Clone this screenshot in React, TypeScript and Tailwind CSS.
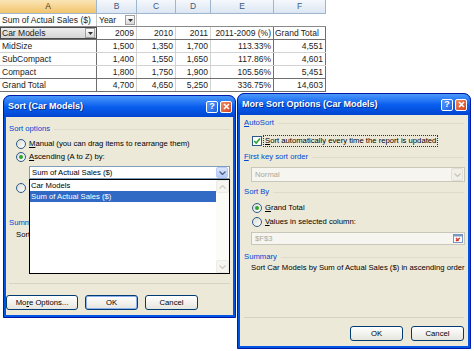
import React from 'react';

const COLS = ['w-[97px]', 'w-[40px]', 'w-[39px]', 'w-[35px]', 'w-[63px]', 'w-[52px]'];
const VLINE = [
  'border-r border-r-[#6F6F6F]',
  'border-r border-r-[#D3D3D3]',
  'border-r border-r-[#D3D3D3]',
  'border-r border-r-[#D3D3D3]',
  'border-r border-r-[#6F6F6F]',
  'border-r border-r-[#6F6F6F]',
];

const DATA = [
  ['MidSize', '1,500', '1,350', '1,700', '113.33%', '4,551'],
  ['SubCompact', '1,400', '1,550', '1,650', '117.86%', '4,601'],
  ['Compact', '1,800', '1,750', '1,900', '105.56%', '5,451'],
];

function CellDrop() {
  return (
    <span className="flex h-[10px] w-[10px] items-center justify-center border border-[#A0A0A0] bg-gradient-to-b from-white to-[#D8D8D8]">
      <svg width="5" height="3" viewBox="0 0 5 3">
        <path d="M0 0h5L2.5 3z" fill="#333" />
      </svg>
    </span>
  );
}

function Sheet() {
  return (
    <div className="w-[326px] text-[8.5px] leading-none text-[#222]">
      {/* column letters */}
      <div className="flex h-[14px]">
        {['A', 'B', 'C', 'D', 'E', 'F'].map((l, i) => (
          <div
            key={l}
            className={`${COLS[i]} flex items-center justify-center border-r border-b border-[#9EB6CE] ${
              i === 0
                ? 'bg-gradient-to-b from-[#FAE5B6] to-[#F2C46C] text-[#4A3510]'
                : 'bg-gradient-to-b from-[#F5F8FC] to-[#DCE6F3] text-[#41587A]'
            }`}
          >
            {l}
          </div>
        ))}
      </div>

      {/* page field row */}
      <div className="flex h-[13px] border-b border-b-[#8A8A8A]">
        <div className="flex w-[97px] items-center border-r border-r-[#C8C8C8] pl-[2px]">Sum of Actual Sales ($)</div>
        <div className="flex w-[40px] items-center justify-between border-r border-r-[#C8C8C8] pl-[2px] pr-[1px]">
          Year
          <CellDrop />
        </div>
      </div>

      {/* column field row */}
      <div className="flex h-[13px] border-b border-b-[#6F6F6F]">
        <div className="flex w-[97px] items-center justify-between border border-[#4A4A4A] bg-gradient-to-b from-[#EDEDED] to-[#D6D6D6] pl-[1px] pr-[1px]">
          Car Models
          <CellDrop />
        </div>
        {['2009', '2010', '2011', '2011-2009 (%)'].map((v, i) => (
          <div key={v} className={`${COLS[i + 1]} ${VLINE[i + 1]} flex items-center justify-end pr-[2px]`}>
            {v}
          </div>
        ))}
        <div className={`${COLS[5]} ${VLINE[5]} flex items-center overflow-hidden whitespace-nowrap pl-[1px]`}>Grand Total</div>
      </div>

      {DATA.map((row, r) => (
        <div
          key={row[0]}
          className={`flex h-[13px] border-b ${r === 2 ? 'border-b-[#6F6F6F]' : 'border-b-[#D3D3D3]'}`}
        >
          {row.map((v, i) => (
            <div
              key={i}
              className={`${COLS[i]} ${VLINE[i]} flex items-center ${i === 0 ? 'pl-[2px]' : 'justify-end pr-[2px]'}`}
            >
              {v}
            </div>
          ))}
        </div>
      ))}

      <div className="flex h-[13px] border-b border-b-[#6F6F6F]">
        {['Grand Total', '4,700', '4,650', '5,250', '336.75%', '14,603'].map((v, i) => (
          <div
            key={i}
            className={`${COLS[i]} ${VLINE[i]} flex items-center ${i === 0 ? 'pl-[2px]' : 'justify-end pr-[2px]'}`}
          >
            {v}
          </div>
        ))}
      </div>
    </div>
  );
}

function TitleBar({ title }: { title: string }) {
  return (
    <div className="flex h-[21px] shrink-0 items-center justify-between rounded-t-[6px] bg-gradient-to-b from-[#4A98FA] via-[#0A5FEF] to-[#0045D0] pl-[4px] pr-[3px]">
      <span className="text-[9px] font-bold text-white [text-shadow:1px_1px_0_#0B2A85]">{title}</span>
      <div className="flex gap-[2px]">
        <div className="flex h-[12px] w-[12px] items-center justify-center rounded-[2px] border border-white bg-gradient-to-br from-[#5A9BFF] to-[#1D5FE0] text-[9px] font-bold leading-none text-white">
          ?
        </div>
        <div className="flex h-[12px] w-[12px] items-center justify-center rounded-[2px] border border-white bg-gradient-to-br from-[#F08A63] to-[#D3401A]">
          <svg width="7" height="7" viewBox="0 0 7 7">
            <path d="M1 1l5 5M6 1L1 6" stroke="white" strokeWidth="1.6" />
          </svg>
        </div>
      </div>
    </div>
  );
}

function Group({ children, className = '' }: { children: React.ReactNode; className?: string }) {
  return (
    <div className={`flex h-[12px] items-center text-[#0046D5] ${className}`}>
      <span>{children}</span>
      <span className="ml-[4px] h-px flex-1 bg-[#DEDBCD]" />
    </div>
  );
}

function Radio({ checked = false }: { checked?: boolean }) {
  return (
    <span className="flex h-[10px] w-[10px] shrink-0 items-center justify-center rounded-full border border-[#2A5A8C] bg-gradient-to-br from-[#DCDBD3] to-white">
      {checked && <span className="h-[4px] w-[4px] rounded-full bg-[#2BA62B]" />}
    </span>
  );
}

function XPButton({ children, className = '', focus = false }: { children: React.ReactNode; className?: string; focus?: boolean }) {
  return (
    <div
      className={`flex h-[15px] items-center justify-center rounded-[3px] border border-[#003C74] bg-gradient-to-b from-white to-[#E6E5DE] text-black ${
        focus ? 'shadow-[inset_0_0_0_1px_#8FB2EE]' : ''
      } ${className}`}
    >
      {children}
    </div>
  );
}

function ComboArrow({ disabled = false }: { disabled?: boolean }) {
  return (
    <span
      className={`flex h-full w-[12px] items-center justify-center rounded-[2px] border ${
        disabled ? 'border-[#E2E0D6] bg-[#F1EFE7]' : 'border-[#B9CBF3] bg-gradient-to-b from-[#DCE6FD] to-[#B3C9F6]'
      }`}
    >
      <svg width="7" height="4" viewBox="0 0 7 4">
        <path d="M0.5 0.5L3.5 3.5L6.5 0.5" stroke={disabled ? '#C9C7BA' : '#4D6185'} strokeWidth="1.3" fill="none" />
      </svg>
    </span>
  );
}

function SortDialog() {
  return (
    <div className="absolute left-[3px] top-[95px] flex h-[223px] w-[233px] flex-col overflow-hidden rounded-t-[7px] border border-[#0019A8] bg-[#0054E3]">
      <TitleBar title="Sort (Car Models)" />
      <div className="relative mx-[2px] mb-[2px] flex flex-1 flex-col bg-[#ECE9D8] px-[3px] pb-[5px] pt-[6px]">
        <Group>Sort options</Group>
        <div className="ml-[7px] mt-[3px] flex h-[12px] items-center gap-[3px]">
          <Radio />
          <span>
            <u>M</u>anual (you can drag items to rearrange them)
          </span>
        </div>
        <div className="ml-[7px] mt-[1px] flex h-[12px] items-center gap-[3px]">
          <Radio checked />
          <span>
            <u>A</u>scending (A to Z) by:
          </span>
        </div>
        <div className="ml-[20px] mt-[3px] flex h-[13px] w-[201px] items-center justify-between border border-[#7F9DB9] bg-white pl-[2px] pr-px">
          Sum of Actual Sales ($)
          <ComboArrow />
        </div>
        {/* descending option, its label lies under the open list */}
        <div className="ml-[7px] mt-[3px] flex h-[12px] items-center gap-[3px]">
          <Radio />
        </div>
        <Group className="mt-[23px]">Summary</Group>
        <div className="ml-[7px] mt-[2px] whitespace-nowrap">Sort</div>

        <div className="mt-auto h-px bg-[#D6D3C4]" />
        <div className="-ml-[3px] mt-[11px] flex gap-[7px]">
          <XPButton className="w-[72px]">
            Mo<u>r</u>e Options...
          </XPButton>
          <XPButton className="w-[53px]" focus>
            OK
          </XPButton>
          <XPButton className="w-[53px]">Cancel</XPButton>
        </div>

        {/* open drop-down list */}
        <div className="absolute left-[23px] top-[62px] flex h-[95px] w-[201px] border border-black bg-white">
          <div className="flex-1 pt-[1px]">
            <div className="flex h-[10px] items-center pl-[1px]">Car Models</div>
            <div className="flex h-[11px] items-center bg-[#316AC5] pl-[1px] text-white">Sum of Actual Sales ($)</div>
          </div>
          <div className="flex w-[13px] flex-col justify-between bg-[#FBFBF8]">
            <div className="flex h-[13px] items-center justify-center rounded-[2px] border border-[#ECEBE4] bg-[#F6F5F0]">
              <svg width="7" height="4" viewBox="0 0 7 4">
                <path d="M0.5 3.5L3.5 0.5L6.5 3.5" stroke="#CFCDC2" strokeWidth="1.3" fill="none" />
              </svg>
            </div>
            <div className="flex h-[13px] items-center justify-center rounded-[2px] border border-[#ECEBE4] bg-[#F6F5F0]">
              <svg width="7" height="4" viewBox="0 0 7 4">
                <path d="M0.5 0.5L3.5 3.5L6.5 0.5" stroke="#CFCDC2" strokeWidth="1.3" fill="none" />
              </svg>
            </div>
          </div>
        </div>
      </div>
    </div>
  );
}

function MoreDialog() {
  return (
    <div className="absolute left-[237px] top-[93px] flex h-[256px] w-[234px] flex-col overflow-hidden rounded-t-[7px] border border-[#0019A8] bg-[#0054E3]">
      <TitleBar title="More Sort Options (Car Models)" />
      <div className="mx-[2px] mb-[2px] flex flex-1 flex-col bg-[#ECE9D8] px-[4px] pb-[5px] pt-[2px]">
        <Group>
          <u>A</u>utoSort
        </Group>
        <div className="ml-[8px] mt-[6px] flex h-[12px] items-center gap-[1px]">
          <span className="flex h-[10px] w-[10px] shrink-0 items-center justify-center border border-[#2A5A8C] bg-white">
            <svg width="8" height="8" viewBox="0 0 8 8">
              <path d="M1.2 4l2 2.1L7 1.5" stroke="#2BA62B" strokeWidth="1.6" fill="none" />
            </svg>
          </span>
          <span className="flex h-[12px] items-center border border-dotted border-[#333] px-[1px]">
            <u>S</u>ort automatically every time the report is updated
          </span>
        </div>
        <Group className="mt-[4px]">
          <u>F</u>irst key sort order
        </Group>
        <div className="ml-[7px] mt-[4px] flex h-[15px] w-[214px] items-center justify-between border border-[#C9C7BA] bg-[#F6F5EF] pl-[3px] pr-px text-[#ACA899]">
          Normal
          <ComboArrow disabled />
        </div>
        <Group className="mt-[4px]">Sort By</Group>
        <div className="ml-[8px] mt-[4px] flex h-[12px] items-center gap-[3px]">
          <Radio checked />
          <span>
            <u>G</u>rand Total
          </span>
        </div>
        <div className="ml-[8px] mt-[2px] flex h-[12px] items-center gap-[3px]">
          <Radio />
          <span>
            <u>V</u>alues in selected column:
          </span>
        </div>
        <div className="ml-[7px] mt-[4px] flex h-[13px] w-[214px] items-center justify-between border border-[#C9C7BA] bg-[#F6F5EF] pl-[3px] pr-px text-[#ACA899]">
          $F$3
          <span className="flex h-[10px] w-[11px] items-center justify-center">
            <svg width="10" height="9" viewBox="0 0 10 9">
              <rect x="0.5" y="0.5" width="9" height="8" fill="#FFFFFF" stroke="#7A96C2" />
              <rect x="0.5" y="0.5" width="9" height="2" fill="#7A96C2" />
              <path d="M3 4l2.5 3M3 7l4-3" stroke="#D0322A" strokeWidth="1.3" />
            </svg>
          </span>
        </div>
        <Group className="mt-[6px]">Summary</Group>
        <div className="ml-[7px] mt-[1px] whitespace-nowrap">Sort Car Models by Sum of Actual Sales ($) in ascending order</div>

        <div className="mt-auto h-px bg-[#D6D3C4]" />
        <div className="mt-[8px] flex justify-end gap-[8px] pr-0">
          <XPButton className="w-[53px]">OK</XPButton>
          <XPButton className="w-[53px]">Cancel</XPButton>
        </div>
      </div>
    </div>
  );
}

export default function App() {
  return (
    <div className="relative h-[351px] w-[474px] overflow-hidden bg-white font-['Liberation_Sans',Arial,sans-serif] text-[7.7px] leading-none text-black">
      <Sheet />
      <SortDialog />
      <MoreDialog />
    </div>
  );
}
